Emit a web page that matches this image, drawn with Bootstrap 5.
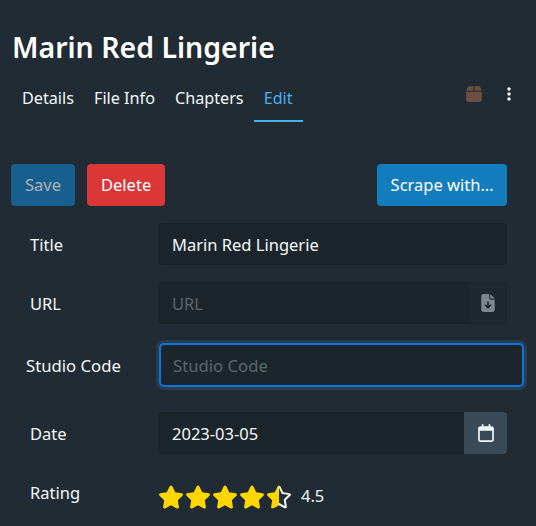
<!DOCTYPE html>
<html lang="en">
<head>
<meta charset="utf-8">
<title>Marin Red Lingerie</title>
<link rel="stylesheet" href="https://cdn.jsdelivr.net/npm/bootstrap@5.3.0/dist/css/bootstrap.min.css">
<style>
html,body{height:100%;overflow:hidden}
body{background:#202b33;color:#f5f8fa;font-family:"Noto Sans","Open Sans",sans-serif;font-size:16.5px}
.page-wrap{padding:29px 29px 0 11px}
.scene-title{font-size:28.5px;font-weight:600;line-height:36px;margin:0 0 0 1px;color:#fff}
.tab-row{margin-top:13px;height:44px}
.tab-row .nav-link{color:#f5f8fa;padding:8px 10px 0;height:44px;border-bottom:2px solid transparent;font-size:16.2px;line-height:24px}
.tab-row .nav-item:first-child .nav-link{padding-left:11px}
.tab-row .nav-link.active{color:#48aff0;border-bottom-color:#48aff0}
.tab-icons{gap:24px;margin-top:7px;margin-right:-5px}
.ico-box{width:16px;height:18px;fill:#6c4f40}
.ico-dots{width:6px;height:16px;fill:#f5f8fa}
.action-row{margin-top:42px;height:42px}
.act-btn{height:42px;padding:0 14px;border:0;font-size:16.5px;border-radius:4px;line-height:42px}
.btn-save{background:#137cbd;color:#f5f8fa;opacity:.65}
.btn-save:disabled{background:#137cbd;color:#f5f8fa;opacity:.65}
.btn-del{background:#db3737;color:#fff;margin-left:12px}
.btn-scrape{background:#137cbd;color:#fff;padding:0 13.5px}
.field-row{display:flex;align-items:center;margin-top:17px;height:42px}
.field-label{width:147px;padding-left:19px;flex:none;margin:0;font-size:16.5px;transform:translateY(1px)}
.field-main{flex:1 1 auto;min-width:0}
.page-wrap .form-control{background:#1c252b;border:1px solid #1a2227;color:#f5f8fa;height:42px;font-size:16.5px;padding:0 13px;border-radius:4px;box-shadow:none}
.page-wrap .form-control::placeholder{color:#5b666e;opacity:1}
.url-add{width:39px;background:#1e282f;border:1px solid #1c252b;border-radius:0 4px 4px 0;padding:0;display:flex;align-items:center;justify-content:center}
.ico-file{width:14px;height:18px;fill:#7d8790}
.cal-add{width:43px;background:#394b59;border:0;border-radius:0 4px 4px 0;padding:0;display:flex;align-items:center;justify-content:center}
.ico-cal{width:16px;height:18px;fill:#f5f8fa}
.code-row{margin-top:19px;height:44px}
.code-row .field-label{padding-left:15px;font-size:16.7px;transform:translateY(1px)}
.code-row .field-main{margin-right:-17px}
.page-wrap .code-row .form-control{height:44px;margin-left:1px;width:calc(100% - 1px);border:2px solid #0b74df;box-shadow:0 0 0 3px #283d50;border-radius:5px;font-size:16.7px;padding:0 12px}
.date-row{margin-top:25px}
.rating-row{margin-top:17px;height:44px}
.rating-row .field-label{transform:none}
.rating-row .field-main{padding-top:7px}
.stars-wrap{gap:1px}
.star-ico{width:26px;height:24px;display:block}
.rating-num{margin-left:9px;font-size:16.5px}
</style>
</head>
<body>
<div class="page-wrap">
  <h1 class="scene-title">Marin Red Lingerie</h1>
  <div class="tab-row d-flex justify-content-between align-items-start">
    <ul class="nav">
      <li class="nav-item"><a class="nav-link" href="#">Details</a></li>
      <li class="nav-item"><a class="nav-link" href="#">File Info</a></li>
      <li class="nav-item"><a class="nav-link" href="#">Chapters</a></li>
      <li class="nav-item"><a class="nav-link active" href="#">Edit</a></li>
    </ul>
    <div class="tab-icons d-flex align-items-center">
      <svg class="ico-box" viewBox="0 0 448 512"><path d="M50.7 58.5L0 160H208V32H93.7C75.5 32 58.9 42.3 50.7 58.5zM240 160H448L397.3 58.5C389.1 42.3 372.5 32 354.3 32H240V160zm208 32H0V416c0 35.3 28.7 64 64 64H384c35.3 0 64-28.7 64-64V192z"/></svg>
      <svg class="ico-dots" viewBox="0 0 128 512"><path d="M64 360a56 56 0 1 0 0 112 56 56 0 1 0 0-112zm0-160a56 56 0 1 0 0 112 56 56 0 1 0 0-112zM120 96A56 56 0 1 0 8 96a56 56 0 1 0 112 0z"/></svg>
    </div>
  </div>
  <div class="action-row d-flex justify-content-between">
    <div class="d-flex">
      <button class="btn act-btn btn-save" disabled>Save</button>
      <button class="btn act-btn btn-del">Delete</button>
    </div>
    <button class="btn act-btn btn-scrape">Scrape with…</button>
  </div>
  <form>
    <div class="field-row">
      <label class="field-label">Title</label>
      <div class="field-main"><input class="form-control" value="Marin Red Lingerie"></div>
    </div>
    <div class="field-row">
      <label class="field-label">URL</label>
      <div class="field-main input-group">
        <input class="form-control" placeholder="URL">
        <button type="button" class="btn url-add"><svg class="ico-file" viewBox="0 0 384 512"><path d="M64 0C28.7 0 0 28.7 0 64V448c0 35.3 28.7 64 64 64H320c35.3 0 64-28.7 64-64V160H256c-17.7 0-32-14.3-32-32V0H64zM256 0V128H384L256 0zM216 232V334.1l31-31c9.4-9.4 24.6-9.4 33.9 0s9.4 24.6 0 33.9l-72 72c-9.4 9.4-24.6 9.4-33.9 0l-72-72c-9.4-9.4-9.4-24.6 0-33.9s24.6-9.4 33.9 0l31 31V232c0-13.3 10.7-24 24-24s24 10.7 24 24z"/></svg></button>
      </div>
    </div>
    <div class="field-row code-row">
      <label class="field-label">Studio Code</label>
      <div class="field-main"><input class="form-control" placeholder="Studio Code"></div>
    </div>
    <div class="field-row date-row">
      <label class="field-label">Date</label>
      <div class="field-main input-group">
        <input class="form-control" value="2023-03-05">
        <button type="button" class="btn cal-add"><svg class="ico-cal" viewBox="0 0 448 512"><path d="M152 24c0-13.3-10.7-24-24-24s-24 10.7-24 24V64H64C28.7 64 0 92.7 0 128v16 48V448c0 35.3 28.7 64 64 64H384c35.3 0 64-28.7 64-64V192 144 128c0-35.3-28.7-64-64-64H344V24c0-13.3-10.7-24-24-24s-24 10.7-24 24V64H152V24zM48 192H400V448c0 8.8-7.2 16-16 16H64c-8.8 0-16-7.2-16-16V192z"/></svg></button>
      </div>
    </div>
    <div class="field-row rating-row">
      <label class="field-label">Rating</label>
      <div class="field-main d-flex align-items-center">
        <div class="stars-wrap d-flex">
          <svg class="star-ico" viewBox="0 0 576 512"><path fill="#ffd700" d="M316.9 18C311.6 7 300.4 0 288.1 0s-23.4 7-28.8 18L195 150.3 51.4 171.5c-12 1.8-22 10.2-25.7 21.7s-.7 24.2 7.9 32.7L137.8 329 113.2 474.7c-2 12 3 24.2 12.9 31.3s23 8 33.8 2.3l128.3-68.5 128.3 68.5c10.8 5.7 23.9 4.9 33.8-2.3s14.9-19.3 12.9-31.3L438.5 329 542.7 225.9c8.6-8.5 11.7-21.2 7.9-32.7s-13.7-19.9-25.7-21.7L381.2 150.3 316.9 18z"/></svg>
          <svg class="star-ico" viewBox="0 0 576 512"><path fill="#ffd700" d="M316.9 18C311.6 7 300.4 0 288.1 0s-23.4 7-28.8 18L195 150.3 51.4 171.5c-12 1.8-22 10.2-25.7 21.7s-.7 24.2 7.9 32.7L137.8 329 113.2 474.7c-2 12 3 24.2 12.9 31.3s23 8 33.8 2.3l128.3-68.5 128.3 68.5c10.8 5.7 23.9 4.9 33.8-2.3s14.9-19.3 12.9-31.3L438.5 329 542.7 225.9c8.6-8.5 11.7-21.2 7.9-32.7s-13.7-19.9-25.7-21.7L381.2 150.3 316.9 18z"/></svg>
          <svg class="star-ico" viewBox="0 0 576 512"><path fill="#ffd700" d="M316.9 18C311.6 7 300.4 0 288.1 0s-23.4 7-28.8 18L195 150.3 51.4 171.5c-12 1.8-22 10.2-25.7 21.7s-.7 24.2 7.9 32.7L137.8 329 113.2 474.7c-2 12 3 24.2 12.9 31.3s23 8 33.8 2.3l128.3-68.5 128.3 68.5c10.8 5.7 23.9 4.9 33.8-2.3s14.9-19.3 12.9-31.3L438.5 329 542.7 225.9c8.6-8.5 11.7-21.2 7.9-32.7s-13.7-19.9-25.7-21.7L381.2 150.3 316.9 18z"/></svg>
          <svg class="star-ico" viewBox="0 0 576 512"><path fill="#ffd700" d="M316.9 18C311.6 7 300.4 0 288.1 0s-23.4 7-28.8 18L195 150.3 51.4 171.5c-12 1.8-22 10.2-25.7 21.7s-.7 24.2 7.9 32.7L137.8 329 113.2 474.7c-2 12 3 24.2 12.9 31.3s23 8 33.8 2.3l128.3-68.5 128.3 68.5c10.8 5.7 23.9 4.9 33.8-2.3s14.9-19.3 12.9-31.3L438.5 329 542.7 225.9c8.6-8.5 11.7-21.2 7.9-32.7s-13.7-19.9-25.7-21.7L381.2 150.3 316.9 18z"/></svg>
          <svg class="star-ico" viewBox="0 0 576 512">
            <defs>
              <clipPath id="leftHalf"><rect x="0" y="0" width="288" height="512"/></clipPath>
              <clipPath id="rightHalf"><rect x="288" y="0" width="288" height="512"/></clipPath>
            </defs>
            <path clip-path="url(#leftHalf)" fill="#ffd700" d="M316.9 18C311.6 7 300.4 0 288.1 0s-23.4 7-28.8 18L195 150.3 51.4 171.5c-12 1.8-22 10.2-25.7 21.7s-.7 24.2 7.9 32.7L137.8 329 113.2 474.7c-2 12 3 24.2 12.9 31.3s23 8 33.8 2.3l128.3-68.5 128.3 68.5c10.8 5.7 23.9 4.9 33.8-2.3s14.9-19.3 12.9-31.3L438.5 329 542.7 225.9c8.6-8.5 11.7-21.2 7.9-32.7s-13.7-19.9-25.7-21.7L381.2 150.3 316.9 18z"/>
            <path clip-path="url(#rightHalf)" fill="#f5f8fa" d="M288 0c12.4 0 23.6 7 28.9 18L381.2 150.3 524.7 171.5c12 1.8 22 10.2 25.7 21.7s.7 24.2-7.9 32.7L438.5 329 463.1 474.7c2 12-3 24.2-12.9 31.3s-23 8-33.8 2.3L288 439.8V386l128 67-24-143 103-102-143-21L288 58V0z"/>
          </svg>
        </div>
        <span class="rating-num">4.5</span>
      </div>
    </div>
  </form>
</div>
<script src="https://cdn.jsdelivr.net/npm/bootstrap@5.3.0/dist/js/bootstrap.bundle.min.js"></script>
</body>
</html>
